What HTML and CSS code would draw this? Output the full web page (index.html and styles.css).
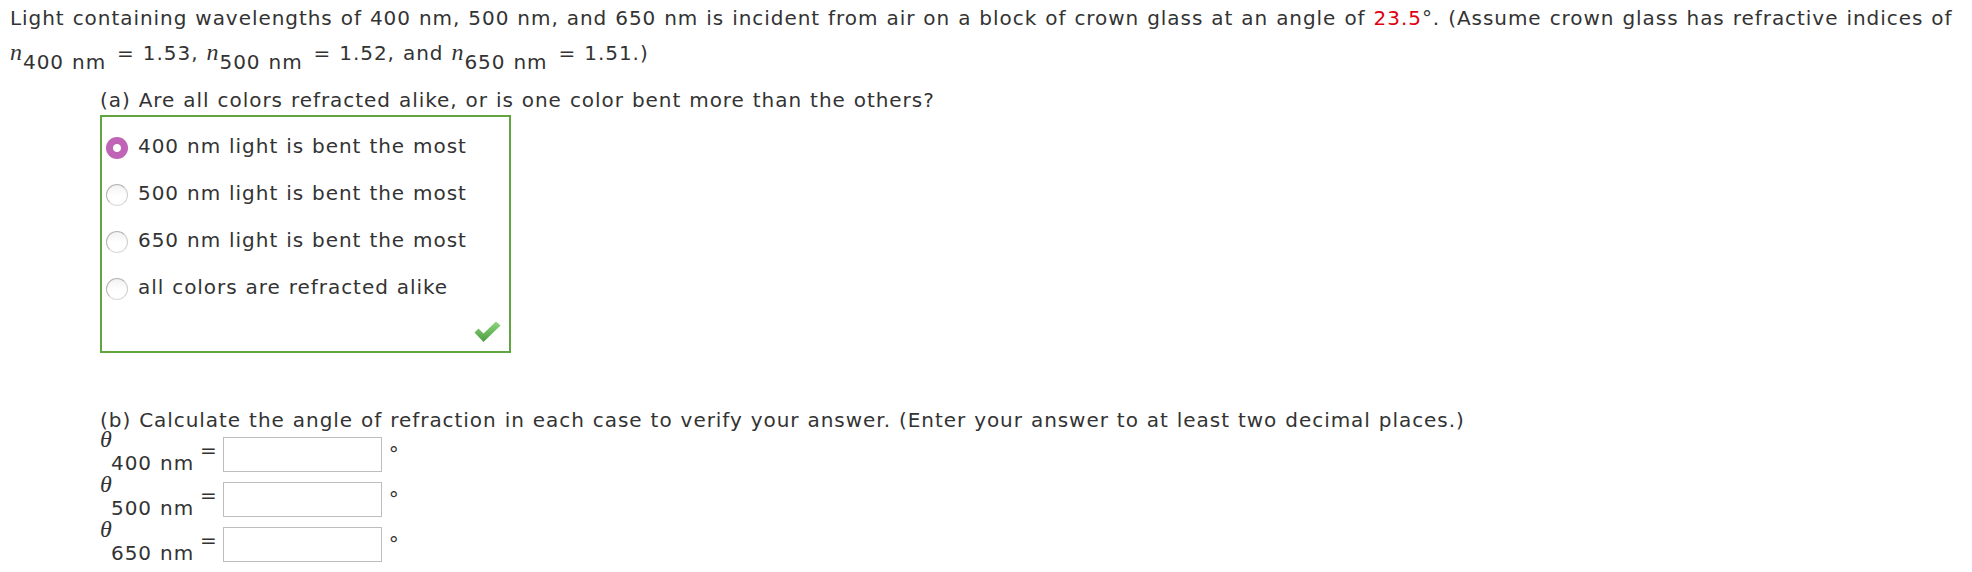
FILE: index.html
```html
<!DOCTYPE html>
<html lang="en">
<head>
<meta charset="utf-8">
<title>Refraction question</title>
<link rel="stylesheet" href="styles.css">
</head>
<body>
<div class="page">
  <p class="stem">Light containing wavelengths of 400 nm, 500 nm, and 650 nm is incident from air on a block of crown glass at an angle of <span class="given">23.5</span>°. (Assume crown glass has refractive indices of <span class="var"><i class="sym">n</i><span class="sub">400 nm</span></span> = 1.53, <span class="var"><i class="sym">n</i><span class="sub">500 nm</span></span> = 1.52, and <span class="var"><i class="sym">n</i><span class="sub">650 nm</span></span> = 1.51.)</p>

  <div class="part">
    <p class="prompt">(a) Are all colors refracted alike, or is one color bent more than the others?</p>
    <div class="choices">
      <div class="choice"><span class="radio checked"></span><span class="label">400 nm light is bent the most</span></div>
      <div class="choice"><span class="radio"></span><span class="label">500 nm light is bent the most</span></div>
      <div class="choice"><span class="radio"></span><span class="label">650 nm light is bent the most</span></div>
      <div class="choice"><span class="radio"></span><span class="label">all colors are refracted alike</span></div>
      <div class="mark">
        <svg width="27" height="22" viewBox="0 0 27 22">
          <defs>
            <linearGradient id="chk" x1="0" y1="0" x2="0" y2="1">
              <stop offset="0" stop-color="#8fd67e"/>
              <stop offset="1" stop-color="#4b9c3f"/>
            </linearGradient>
          </defs>
          <path d="M0.5 11.5 L4.5 7.5 L9.5 12.5 L22 0.5 L26.5 4.5 L9.5 21 Z" fill="url(#chk)"/>
        </svg>
      </div>
    </div>
  </div>

  <div class="part part-b">
    <p class="prompt">(b) Calculate the angle of refraction in each case to verify your answer. (Enter your answer to at least two decimal places.)</p>
    <div class="answer-row"><i class="theta">θ</i><span class="asub">400 nm</span><span class="eq">=</span><span class="field"></span><span class="deg">°</span></div>
    <div class="answer-row"><i class="theta">θ</i><span class="asub">500 nm</span><span class="eq">=</span><span class="field"></span><span class="deg">°</span></div>
    <div class="answer-row"><i class="theta">θ</i><span class="asub">650 nm</span><span class="eq">=</span><span class="field"></span><span class="deg">°</span></div>
  </div>
</div>
</body>
</html>
```

FILE: styles.css
```css
html, body {
  margin: 0;
  padding: 0;
  background: #ffffff;
}

body {
  font-family: "DejaVu Sans", Verdana, sans-serif;
  font-size: 20px;
  letter-spacing: 0.95px;
  word-spacing: 0.7px;
  color: #333333;
}

.page {
  padding: 1px 10px 0 10px;
  width: 1952px;
}

.stem {
  margin: 0;
  line-height: 35px;
}

.given {
  color: #e00012;
}

.sym {
  font-family: "Liberation Serif", "Times New Roman", serif;
  font-size: 24px;
  font-style: italic;
  line-height: 0;
  letter-spacing: 0;
}

.sub {
  vertical-align: -9px;
  line-height: 0;
  margin: 0 3px 0 1px;
}

.part {
  margin-left: 90px;
}

.prompt {
  margin: 15px 0 0 0;
  line-height: 29px;
}

.choices {
  box-sizing: border-box;
  width: 411px;
  height: 238px;
  border: 2px solid #62a43f;
  padding: 6px 0 0 4px;
  display: flex;
  flex-direction: column;
}

.choice {
  display: flex;
  align-items: center;
  height: 47px;
  line-height: 47px;
}

.radio {
  box-sizing: border-box;
  width: 22px;
  height: 22px;
  border-radius: 50%;
  margin: 3px 10px 0 0;
  flex: none;
  border: 1px solid #b4b4b4;
  border-bottom-color: #dcdcdc;
  border-right-color: #cfcfcf;
  background: linear-gradient(#f2f2f2, #ffffff 55%);
}

.radio.checked {
  border: none;
  background: radial-gradient(circle, #ffffff 0 3.5px, #c064b5 4.5px);
}

.mark {
  display: flex;
  justify-content: flex-end;
  padding: 10px 8px 0 0;
}

.mark svg {
  display: block;
}

.part-b .prompt {
  margin-top: 54px;
  line-height: 26px;
}

.answer-row {
  display: flex;
  align-items: flex-start;
  height: 45px;
  line-height: 20px;
}

.theta {
  font-family: "Liberation Serif", "Times New Roman", serif;
  font-size: 24px;
  font-style: italic;
  line-height: 12px;
  letter-spacing: 0;
  width: 13px;
}

.asub {
  margin: 20px 0 0 -2px;
}

.eq {
  margin: 7px 0 0 6px;
}

.field {
  box-sizing: border-box;
  width: 159px;
  height: 35px;
  margin: 4px 0 0 5px;
  border: 1px solid #bdbdbd;
  background: #ffffff;
}

.deg {
  margin: 11px 0 0 7px;
}
```
